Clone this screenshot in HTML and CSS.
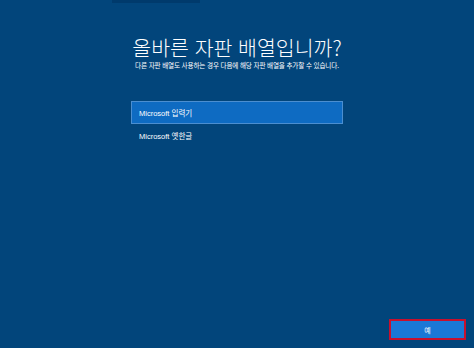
FILE: index.html
```html
<!DOCTYPE html>
<html lang="ko">
<head>
    <meta charset="UTF-8">
    <meta name="viewport" content="width=device-width, initial-scale=1.0">
    <title>자판 배열</title>
    <link rel="stylesheet" href="styles.css">
</head>
<body>
    <div class="topbar"></div>

    <main class="page">
        <h1 class="title">올바른 자판 배열입니까?</h1>
        <p class="subtitle">다른 자판 배열도 사용하는 경우 다음에 해당 자판 배열을 추가할 수 있습니다.</p>

        <ul class="layouts">
            <li class="layout selected">Microsoft 입력기</li>
            <li class="layout">Microsoft 옛한글</li>
        </ul>
    </main>

    <footer class="footer">
        <button class="yes-btn">예</button>
    </footer>
</body>
</html>
```

FILE: styles.css
```css
/* Global Styles */
body {
    margin: 0;
    padding: 0;
    width: 474px;
    height: 348px;
    background-color: #02457b;
    color: #fff;
    font-family: "Noto Sans CJK KR", "Noto Sans", sans-serif;
    display: flex;
    flex-direction: column;
    overflow: hidden;
}

.topbar {
    width: 88px;
    height: 3px;
    margin-left: 112px;
    background-color: #003a6c;
}

.page {
    flex: 1;
    display: flex;
    flex-direction: column;
    align-items: center;
}

.title {
    margin: 32px 0 0;
    font-size: 20.5px;
    font-weight: 300;
    line-height: 24px;
}

.subtitle {
    margin: 2px 0 0;
    font-size: 6.6px;
    letter-spacing: -0.15px;
    line-height: 9px;
}

/* Layout list */
.layouts {
    list-style: none;
    margin: 31px 0 0;
    padding: 0;
    width: 212px;
}

.layout {
    height: 23px;
    padding-left: 7px;
    box-sizing: border-box;
    display: flex;
    align-items: center;
    font-family: "Liberation Sans", "Noto Sans CJK KR", sans-serif;
    font-size: 7.5px;
    border: 1px solid transparent;
}

.layout.selected {
    background-color: #0e6bc2;
    border-color: #4b8ed0;
}

.footer {
    display: flex;
    justify-content: flex-end;
    padding: 0 8px 8px 0;
}

.yes-btn {
    width: 77px;
    height: 21px;
    background-color: #1a78d6;
    border: 2px solid #c8102e;
    color: #fff;
    font-family: "Noto Sans CJK KR", sans-serif;
    font-size: 7px;
    padding: 0;
    cursor: pointer;
}
```
